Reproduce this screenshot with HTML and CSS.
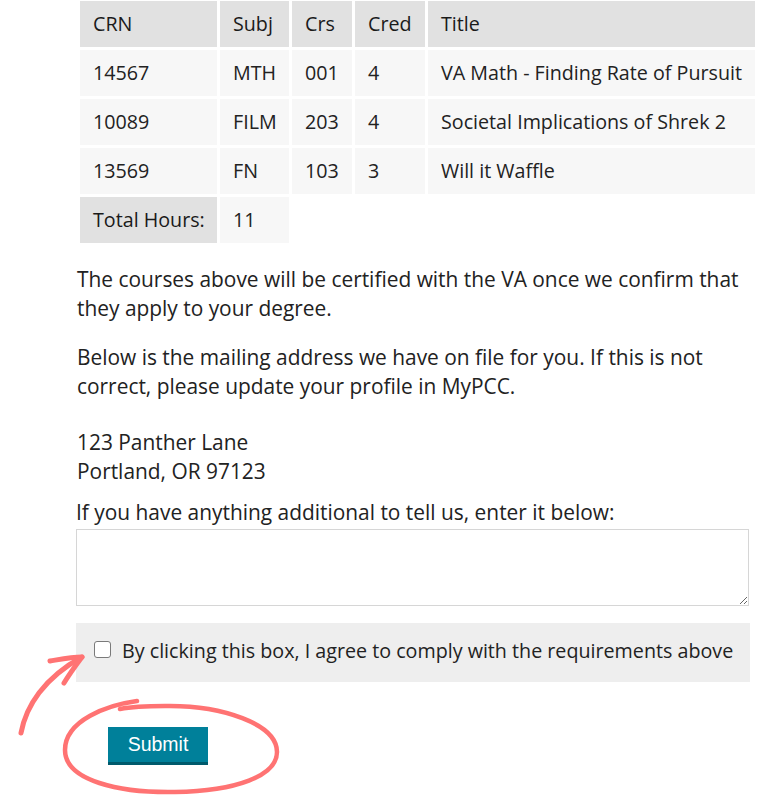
FILE: index.html
```html
<!DOCTYPE html>
<html lang="en">
<head>
<meta charset="utf-8">
<title>VA Certification</title>
<link rel="stylesheet" href="styles.css">
</head>
<body>
<div class="page">
  <table class="courses">
    <colgroup>
      <col class="c-crn"><col class="c-subj"><col class="c-crs"><col class="c-cred"><col class="c-title">
    </colgroup>
    <thead>
      <tr><th>CRN</th><th>Subj</th><th>Crs</th><th>Cred</th><th>Title</th></tr>
    </thead>
    <tbody>
      <tr><td>14567</td><td>MTH</td><td>001</td><td>4</td><td>VA Math - Finding Rate of Pursuit</td></tr>
      <tr><td>10089</td><td>FILM</td><td>203</td><td>4</td><td>Societal Implications of Shrek 2</td></tr>
      <tr><td>13569</td><td>FN</td><td>103</td><td>3</td><td>Will it Waffle</td></tr>
      <tr class="total"><th>Total Hours:</th><td>11</td><td class="empty" colspan="3"></td></tr>
    </tbody>
  </table>

  <p class="text p1">The courses above will be certified with the VA once we confirm that they apply to your degree.</p>
  <p class="text p2">Below is the mailing address we have on file for you. If this is not correct, please update your profile in MyPCC.</p>
  <p class="text address">123 Panther Lane<br>Portland, OR 97123</p>

  <label class="note-label" for="note">If you have anything additional to tell us, enter it below:</label>
  <textarea id="note" class="note"></textarea>

  <div class="agree">
    <input type="checkbox" id="agree" class="agree-box">
    <label for="agree" class="agree-text">By clicking this box, I agree to comply with the requirements above</label>
  </div>

  <div class="actions">
    <button class="submit" type="button">Submit</button>
  </div>

  <svg class="marks" width="768" height="805" viewBox="0 0 768 805" aria-hidden="true">
    <path d="M21,733 C26,706 44,678 82,657" fill="none" stroke="#ff7373" stroke-width="5" stroke-linecap="round"/>
    <path d="M50,661 C62,659 72,657 82,657 C76,665 70,673 64,683" fill="none" stroke="#ff7373" stroke-width="5" stroke-linecap="round" stroke-linejoin="round"/>
    <path d="M137,701 C108,705 65,720 65,750 C65,781 120,793 175,792 C236,791 277,776 277,752 C277,724 222,705 165,706 C145,706 130,707 120,709" fill="none" stroke="#ff7373" stroke-width="4.5" stroke-linecap="round"/>
  </svg>
</div>
</body>
</html>
```

FILE: styles.css
```css
html, body {
  margin: 0;
  padding: 0;
  background: #ffffff;
}

body {
  font-family: "Open Sans", "Noto Sans", sans-serif;
  color: #222222;
  font-size: 20px;
}

.page {
  position: relative;
  width: 768px;
  height: 805px;
  overflow: hidden;
  padding-left: 76px;
  box-sizing: border-box;
}

.courses {
  border-collapse: separate;
  border-spacing: 3px;
  table-layout: fixed;
  width: 681px;
  margin: -2px 0 0 1px;
}

.c-crn { width: 137px; }
.c-subj { width: 69px; }
.c-crs { width: 60px; }
.c-cred { width: 70px; }
.c-title { width: 327px; }

.courses th,
.courses td {
  height: 46px;
  box-sizing: border-box;
  padding: 0 13px;
  text-align: left;
  font-weight: normal;
  font-size: 19.7px;
  line-height: 24px;
  white-space: nowrap;
  overflow: visible;
}

.courses th {
  background: #e1e1e1;
  color: #1a1a1a;
}

.courses td {
  background: #f7f7f7;
}

.courses td.empty {
  background: transparent;
}

.text {
  margin: 0 0 0 1px;
  line-height: 29px;
  font-size: 20.9px;
}

.p1 { margin-top: 19px; }
.p2 { margin-top: 20px; }
.address { margin-top: 27px; }

.note-label {
  display: block;
  margin-top: 12px;
  line-height: 29px;
  font-size: 20.9px;
}

.note {
  display: block;
  box-sizing: border-box;
  width: 673px;
  height: 77px;
  margin: 2px 0 0 0;
  border: 1px solid #d6d6d6;
  border-radius: 0;
  font-family: inherit;
  font-size: 16px;
  padding: 4px;
}

.agree {
  display: flex;
  align-items: center;
  width: 674px;
  height: 59px;
  margin-top: 17px;
  box-sizing: border-box;
  padding: 0 0 5px 18px;
  background: #eeeeee;
}

.agree-box {
  appearance: none;
  -webkit-appearance: none;
  width: 17px;
  height: 17px;
  margin: 0 11px 0 0;
  box-sizing: border-box;
  border: 1.5px solid #7a7a7a;
  border-radius: 3px;
  background: #ffffff;
  position: relative;
  top: -1px;
}

.agree-text {
  font-size: 19.7px;
  line-height: 29px;
  color: #222222;
}

.actions {
  margin-top: 45px;
  padding-left: 32px;
}

.submit {
  width: 100px;
  height: 38px;
  border: 0;
  border-bottom: 3px solid #005a6c;
  border-radius: 0;
  background: #00809a;
  color: #ffffff;
  font-family: "Liberation Sans", Arial, sans-serif;
  font-size: 19.5px;
  padding: 0;
  line-height: 35px;
}

.marks {
  position: absolute;
  left: 0;
  top: 0;
  pointer-events: none;
}
```
